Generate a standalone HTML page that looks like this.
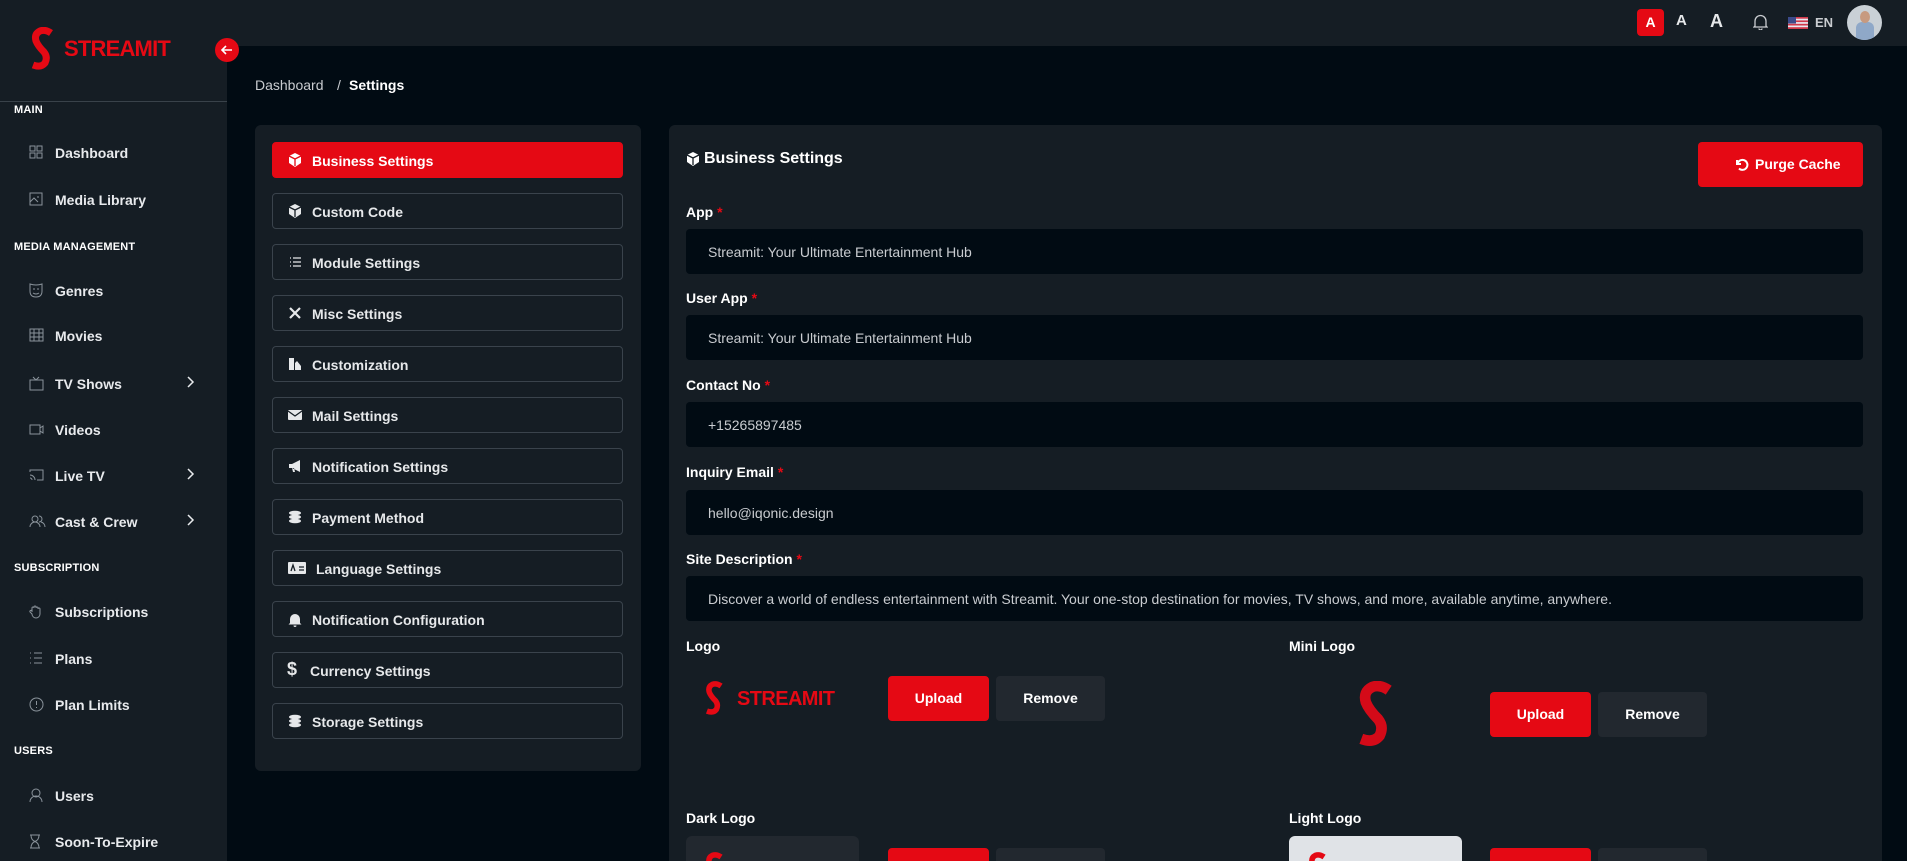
<!DOCTYPE html>
<html><head><meta charset="utf-8"><style>
*{box-sizing:border-box;margin:0;padding:0}
html,body{width:1907px;height:861px;overflow:hidden;background:#010b13}
body{font-family:"Liberation Sans",sans-serif;color:#fff}
#wrap{position:relative;width:1907px;height:861px;overflow:hidden}
.abs{position:absolute}
#side{left:0;top:0;width:227px;height:861px;background:#151d24}
#top{left:227px;top:0;width:1680px;height:46px;background:#151d24}
.sec{position:absolute;left:14px;font-size:11px;font-weight:bold;color:#fff;letter-spacing:.2px}
.it{position:absolute;left:0;width:227px;height:20px;font-size:14px;font-weight:bold;color:#e8eaed}
.it span{position:absolute;left:55px;top:2px}
.it svg{position:absolute;left:29px;top:2px}
.it .ch{position:absolute;left:186px;top:1px}
.btn{position:absolute;left:272px;width:351px;height:36px;border:1px solid #3a434c;border-radius:4px;font-size:14px;font-weight:bold;color:#e6e8ea}
.btn span{position:absolute;left:39px;top:10px}
.btn svg{position:absolute;left:15px;top:10px}
.lbl{position:absolute;left:686px;font-size:14px;font-weight:bold;color:#fff}
.lbl b{color:#e50914}
.inp{position:absolute;left:686px;width:1177px;height:45px;background:#010b13;border-radius:4px;font-size:14px;color:#c9ccd0;padding:15px 0 0 22px}
.up{position:absolute;width:101px;height:45px;background:#e50914;border-radius:4px;font-size:14px;font-weight:bold;text-align:center;line-height:45px}
.rm{position:absolute;width:109px;height:45px;background:#22282f;border-radius:4px;font-size:14px;font-weight:bold;text-align:center;line-height:45px}
</style></head><body><div id="wrap">
<div id="side" class="abs">
 <svg class="abs" style="left:28px;top:27px" width="28" height="44" viewBox="0 0 28 44"><path d="M23 6 Q17 2 12 4 Q6 7 8 14 Q10 19 16 25 Q20 30 17 36 Q13 41 5 38" fill="none" stroke="#e50914" stroke-width="7" stroke-linecap="butt"/></svg>
 <div class="abs" style="left:64px;top:36px;font-size:22px;font-weight:bold;color:#e50914;letter-spacing:-.8px">STREAMIT</div>
 <div class="abs" style="left:0;top:101px;width:227px;height:1px;background:#39424a"></div>
 <div class="sec" style="top:104px">MAIN</div>
 <div class="it" style="top:143px"><svg width="14" height="14" viewBox="0 0 14 14" fill="none" stroke="#8a939b"><rect x="1" y="1" width="5" height="5"/><rect x="8" y="1" width="5" height="5"/><rect x="1" y="8" width="5" height="5"/><rect x="8" y="8" width="5" height="5"/></svg><span>Dashboard</span></div>
 <div class="it" style="top:190px"><svg width="14" height="14" viewBox="0 0 14 14" fill="none" stroke="#8a939b"><rect x="1" y="1" width="12" height="12"/><path d="M1 10 L5 6 L9 10 M8 5h2"/></svg><span>Media Library</span></div>
 <div class="sec" style="top:241px">MEDIA MANAGEMENT</div>
 <div class="it" style="top:281px"><svg width="14" height="15" viewBox="0 0 14 15" fill="none" stroke="#8a939b"><path d="M1 1 Q7 3 13 1 V8 Q13 14 7 14 Q1 14 1 8 Z M4 6h2 M8 6h2 M4 10 Q7 12 10 10"/></svg><span>Genres</span></div>
 <div class="it" style="top:326px"><svg width="15" height="14" viewBox="0 0 15 14" fill="none" stroke="#8a939b"><rect x="1" y="1" width="13" height="12"/><path d="M1 5h13 M1 9h13 M5 1v12 M10 1v12"/></svg><span>Movies</span></div>
 <div class="it" style="top:374px"><svg width="15" height="15" viewBox="0 0 15 15" fill="none" stroke="#8a939b"><rect x="1" y="4" width="13" height="10"/><path d="M4 1l3 3 3-3"/></svg><span>TV Shows</span><svg class="ch" width="10" height="14" viewBox="0 0 10 14" fill="none" stroke="#e8eaed" stroke-width="1.5"><path d="M2 2l5 5-5 5"/></svg></div>
 <div class="it" style="top:420px"><svg width="15" height="14" viewBox="0 0 15 14" fill="none" stroke="#8a939b"><rect x="1" y="3" width="10" height="9"/><path d="M11 6l3-2v7l-3-2"/></svg><span>Videos</span></div>
 <div class="it" style="top:466px"><svg width="15" height="14" viewBox="0 0 15 14" fill="none" stroke="#8a939b"><path d="M1 4V2h13v10H8 M1 7a5 5 0 0 1 5 5 M1 10a2 2 0 0 1 2 2"/></svg><span>Live TV</span><svg class="ch" width="10" height="14" viewBox="0 0 10 14" fill="none" stroke="#e8eaed" stroke-width="1.5"><path d="M2 2l5 5-5 5"/></svg></div>
 <div class="it" style="top:512px"><svg width="17" height="14" viewBox="0 0 17 14" fill="none" stroke="#8a939b"><circle cx="6" cy="5" r="3"/><path d="M1 13a5 5 0 0 1 10 0 M10 2a3 3 0 0 1 0 6 M12 8a5 5 0 0 1 4 5"/></svg><span>Cast &amp; Crew</span><svg class="ch" width="10" height="14" viewBox="0 0 10 14" fill="none" stroke="#e8eaed" stroke-width="1.5"><path d="M2 2l5 5-5 5"/></svg></div>
 <div class="sec" style="top:562px">SUBSCRIPTION</div>
 <div class="it" style="top:602px"><svg width="14" height="15" viewBox="0 0 14 15" fill="none" stroke="#8a939b"><path d="M3 8V4a1 1 0 0 1 2 0V3a1 1 0 0 1 2 0v1a1 1 0 0 1 2 0v1a1 1 0 0 1 2 0v5a4 4 0 0 1-8 0L1 8a1 1 0 0 1 2-1z"/></svg><span>Subscriptions</span></div>
 <div class="it" style="top:649px"><svg width="14" height="14" viewBox="0 0 14 14" fill="none" stroke="#8a939b"><path d="M1 2h1 M5 2h8 M1 7h1 M5 7h8 M1 12h1 M5 12h8"/></svg><span>Plans</span></div>
 <div class="it" style="top:695px"><svg width="15" height="15" viewBox="0 0 15 15" fill="none" stroke="#8a939b"><circle cx="7.5" cy="7.5" r="6.5"/><path d="M7.5 4v4 M7.5 10v1"/></svg><span>Plan Limits</span></div>
 <div class="sec" style="top:745px">USERS</div>
 <div class="it" style="top:786px"><svg width="14" height="15" viewBox="0 0 14 15" fill="none" stroke="#8a939b"><circle cx="7" cy="5" r="4"/><path d="M1 14a6 6 0 0 1 12 0"/></svg><span>Users</span></div>
 <div class="it" style="top:832px"><svg width="12" height="15" viewBox="0 0 12 15" fill="none" stroke="#8a939b"><path d="M1 1h10 M1 14h10 M2 1q0 5 4 6.5q4-1.5 4-6.5 M2 14q0-5 4-6.5q4 1.5 4 6.5"/></svg><span>Soon-To-Expire</span></div>
</div>
<div id="top" class="abs"></div>
<div class="abs" style="left:215px;top:38px;width:24px;height:24px;border-radius:50%;background:#e50914"><svg width="24" height="24" viewBox="0 0 24 24" fill="none" stroke="#fff" stroke-width="1.6"><path d="M17 12H7 M11 8l-4 4 4 4"/></svg></div>
<div class="abs" style="left:1637px;top:9px;width:27px;height:27px;background:#e50914;border-radius:4px;font-size:14px;font-weight:bold;text-align:center;line-height:27px">A</div>
<div class="abs" style="left:1676px;top:12px;font-size:15px;font-weight:bold;color:#e6e8ea">A</div>
<div class="abs" style="left:1710px;top:11px;font-size:18px;font-weight:bold;color:#e6e8ea">A</div>
<svg class="abs" style="left:1753px;top:13px" width="15" height="17" viewBox="0 0 15 17" fill="none" stroke="#c9ccd0" stroke-width="1.3"><path d="M2 13V8a5.5 5.5 0 0 1 11 0v5l1 1H1z M6 15.5a1.5 1.5 0 0 0 3 0"/></svg>
<svg class="abs" style="left:1788px;top:17px" width="20" height="12" viewBox="0 0 20 12"><rect width="20" height="12" fill="#e8e8f0"/><rect y="0" width="20" height="1.7" fill="#d0384a"/><rect y="3.4" width="20" height="1.7" fill="#d0384a"/><rect y="6.8" width="20" height="1.7" fill="#d0384a"/><rect y="10.2" width="20" height="1.8" fill="#d0384a"/><rect width="8" height="6.5" fill="#3b4a8a"/></svg>
<div class="abs" style="left:1815px;top:15px;font-size:13px;font-weight:bold;color:#c9ccd0">EN</div>
<div class="abs" style="left:1847px;top:5px;width:35px;height:35px;border-radius:50%;background:#c9d0d6;overflow:hidden"><div style="position:absolute;left:9px;top:17px;width:18px;height:20px;background:#8fa8c8;border-radius:6px 6px 0 0"></div><div style="position:absolute;left:13px;top:6px;width:10px;height:12px;background:#c79a80;border-radius:50%"></div></div>
<div class="abs" style="left:255px;top:77px;font-size:14px;color:#c9ccd0">Dashboard</div>
<div class="abs" style="left:337px;top:77px;font-size:14px;color:#c9ccd0">/</div>
<div class="abs" style="left:349px;top:77px;font-size:14px;font-weight:bold;color:#fff">Settings</div>
<div class="abs" style="left:255px;top:125px;width:386px;height:646px;background:#151d24;border-radius:6px"></div>
<div class="btn" style="top:142px;background:#e50914;border-color:#e50914;color:#fff"><svg width="14" height="14" viewBox="0 0 14 14"><path d="M7 0L13 3V10L7 14L1 10V3Z" fill="#fff"/><path d="M7 6V13 M1 3L7 6L13 3" stroke="#e50914" stroke-width="1.3" fill="none"/></svg><span>Business Settings</span></div>
<div class="btn" style="top:193px"><svg width="14" height="14" viewBox="0 0 14 14"><path d="M7 0L13 3V10L7 14L1 10V3Z" fill="#e6e8ea"/><path d="M7 6V13 M1 3L7 6L13 3" stroke="#151d24" stroke-width="1.3" fill="none"/></svg><span>Custom Code</span></div>
<div class="btn" style="top:244px"><svg width="14" height="14" viewBox="0 0 14 14" stroke="#e6e8ea" stroke-width="1.3"><path d="M2 3h1 M5 3h8 M2 7h1 M5 7h8 M2 11h1 M5 11h8"/></svg><span>Module Settings</span></div>
<div class="btn" style="top:295px"><svg width="14" height="14" viewBox="0 0 14 14" stroke="#e6e8ea" stroke-width="2.2"><path d="M2 2L12 12 M12 2L2 12"/></svg><span>Misc Settings</span></div>
<div class="btn" style="top:346px"><svg width="14" height="14" viewBox="0 0 14 14" fill="#e6e8ea"><rect x="1" y="1" width="5" height="12"/><path d="M7 13L13 13L13 9L9 4L7 6Z"/></svg><span>Customization</span></div>
<div class="btn" style="top:397px"><svg width="14" height="14" viewBox="0 0 14 14" fill="#e6e8ea"><rect x="0" y="2" width="14" height="10" rx="1"/><path d="M0 3L7 8L14 3" stroke="#151d24" fill="none" stroke-width="1.3"/></svg><span>Mail Settings</span></div>
<div class="btn" style="top:448px"><svg width="15" height="14" viewBox="0 0 15 14" fill="#e6e8ea"><path d="M1 5h3l8-4v12l-8-4H1z M4 9l1 4h2l-1-4z"/></svg><span>Notification Settings</span></div>
<div class="btn" style="top:499px"><svg width="14" height="14" viewBox="0 0 14 14" fill="#e6e8ea"><ellipse cx="7" cy="3" rx="6" ry="2.3"/><ellipse cx="7" cy="7" rx="6" ry="2.3"/><ellipse cx="7" cy="11" rx="6" ry="2.3"/></svg><span>Payment Method</span></div>
<div class="btn" style="top:550px"><svg width="18" height="14" viewBox="0 0 18 14" fill="#e6e8ea"><rect x="0" y="1" width="18" height="12" rx="1"/><path d="M3 10L5 4L7 10 M11 6h5 M11 9h5" stroke="#151d24" stroke-width="1.3" fill="none"/></svg><span style="left:43px">Language Settings</span></div>
<div class="btn" style="top:601px"><svg width="14" height="15" viewBox="0 0 14 15" fill="#e6e8ea"><path d="M2 11V7a5 5 0 0 1 10 0v4l1.5 1.5h-13z M5.5 13.5a1.5 1.5 0 0 0 3 0z"/></svg><span>Notification Configuration</span></div>
<div class="btn" style="top:652px"><div style="position:absolute;left:14px;top:6px;font-size:18px;font-weight:bold">$</div><span style="left:37px">Currency Settings</span></div>
<div class="btn" style="top:703px"><svg width="14" height="14" viewBox="0 0 14 14" fill="#e6e8ea"><ellipse cx="7" cy="3" rx="6" ry="2.3"/><ellipse cx="7" cy="7" rx="6" ry="2.3"/><ellipse cx="7" cy="11" rx="6" ry="2.3"/></svg><span>Storage Settings</span></div>
<div class="abs" style="left:669px;top:125px;width:1213px;height:760px;background:#151d24;border-radius:6px"></div>
<svg class="abs" style="left:686px;top:152px" width="14" height="14" viewBox="0 0 14 14"><path d="M7 0L13 3V10L7 14L1 10V3Z" fill="#fff"/><path d="M7 6V13 M1 3L7 6L13 3" stroke="#151d24" stroke-width="1.3" fill="none"/></svg>
<div class="abs" style="left:704px;top:150px;font-size:16px;font-weight:bold">Business Settings</div>
<div class="abs" style="left:1698px;top:142px;width:165px;height:45px;background:#e50914;border-radius:4px;font-size:14px;font-weight:bold;line-height:45px;padding-left:57px">Purge Cache</div>
<svg class="abs" style="left:1734px;top:157px" width="15" height="15" viewBox="0 0 15 15" fill="none" stroke="#fff" stroke-width="2"><path d="M3 3v4h4 M3.5 7A5 5 0 1 1 5 11.5"/></svg>
<div class="lbl" style="top:204px">App <b>*</b></div>
<div class="inp" style="top:229px">Streamit: Your Ultimate Entertainment Hub</div>
<div class="lbl" style="top:290px">User App <b>*</b></div>
<div class="inp" style="top:315px">Streamit: Your Ultimate Entertainment Hub</div>
<div class="lbl" style="top:377px">Contact No <b>*</b></div>
<div class="inp" style="top:402px">+15265897485</div>
<div class="lbl" style="top:464px">Inquiry Email <b>*</b></div>
<div class="inp" style="top:490px">hello@iqonic.design</div>
<div class="lbl" style="top:551px">Site Description <b>*</b></div>
<div class="inp" style="top:576px">Discover a world of endless entertainment with Streamit. Your one-stop destination for movies, TV shows, and more, available anytime, anywhere.</div>
<div class="lbl" style="top:638px">Logo</div>
<svg class="abs" style="left:703px;top:681px" width="22" height="35" viewBox="0 0 28 44"><path d="M23 6 Q17 2 12 4 Q6 7 8 14 Q10 19 16 25 Q20 30 17 36 Q13 41 5 38" fill="none" stroke="#e50914" stroke-width="7"/></svg>
<div class="abs" style="left:737px;top:688px;font-size:20px;font-weight:bold;color:#e50914;letter-spacing:-.6px">STREAMIT</div>
<div class="up" style="left:888px;top:676px">Upload</div>
<div class="rm" style="left:996px;top:676px">Remove</div>
<div class="lbl" style="left:1289px;top:638px">Mini Logo</div>
<svg class="abs" style="left:1351px;top:681px" width="48" height="67" viewBox="0 0 28 44"><path d="M23 6 Q17 2 12 4 Q6 7 8 14 Q10 19 16 25 Q20 30 17 36 Q13 41 5 38" fill="none" stroke="#d40a18" stroke-width="7"/></svg>
<div class="up" style="left:1490px;top:692px">Upload</div>
<div class="rm" style="left:1598px;top:692px">Remove</div>
<div class="lbl" style="top:810px">Dark Logo</div>
<div class="abs" style="left:686px;top:836px;width:173px;height:40px;background:#22282f;border-radius:6px"></div>
<svg class="abs" style="left:703px;top:852px" width="22" height="35" viewBox="0 0 28 44"><path d="M23 6 Q17 2 12 4 Q6 7 8 14 Q10 19 16 25 Q20 30 17 36 Q13 41 5 38" fill="none" stroke="#e50914" stroke-width="7"/></svg>
<div class="up" style="left:888px;top:848px">Upload</div>
<div class="rm" style="left:996px;top:848px">Remove</div>
<div class="lbl" style="left:1289px;top:810px">Light Logo</div>
<div class="abs" style="left:1289px;top:836px;width:173px;height:40px;background:#e0e3e7;border-radius:6px"></div>
<svg class="abs" style="left:1306px;top:852px" width="22" height="35" viewBox="0 0 28 44"><path d="M23 6 Q17 2 12 4 Q6 7 8 14 Q10 19 16 25 Q20 30 17 36 Q13 41 5 38" fill="none" stroke="#e50914" stroke-width="7"/></svg>
<div class="up" style="left:1490px;top:848px">Upload</div>
<div class="rm" style="left:1598px;top:848px">Remove</div>
</div></body></html>
